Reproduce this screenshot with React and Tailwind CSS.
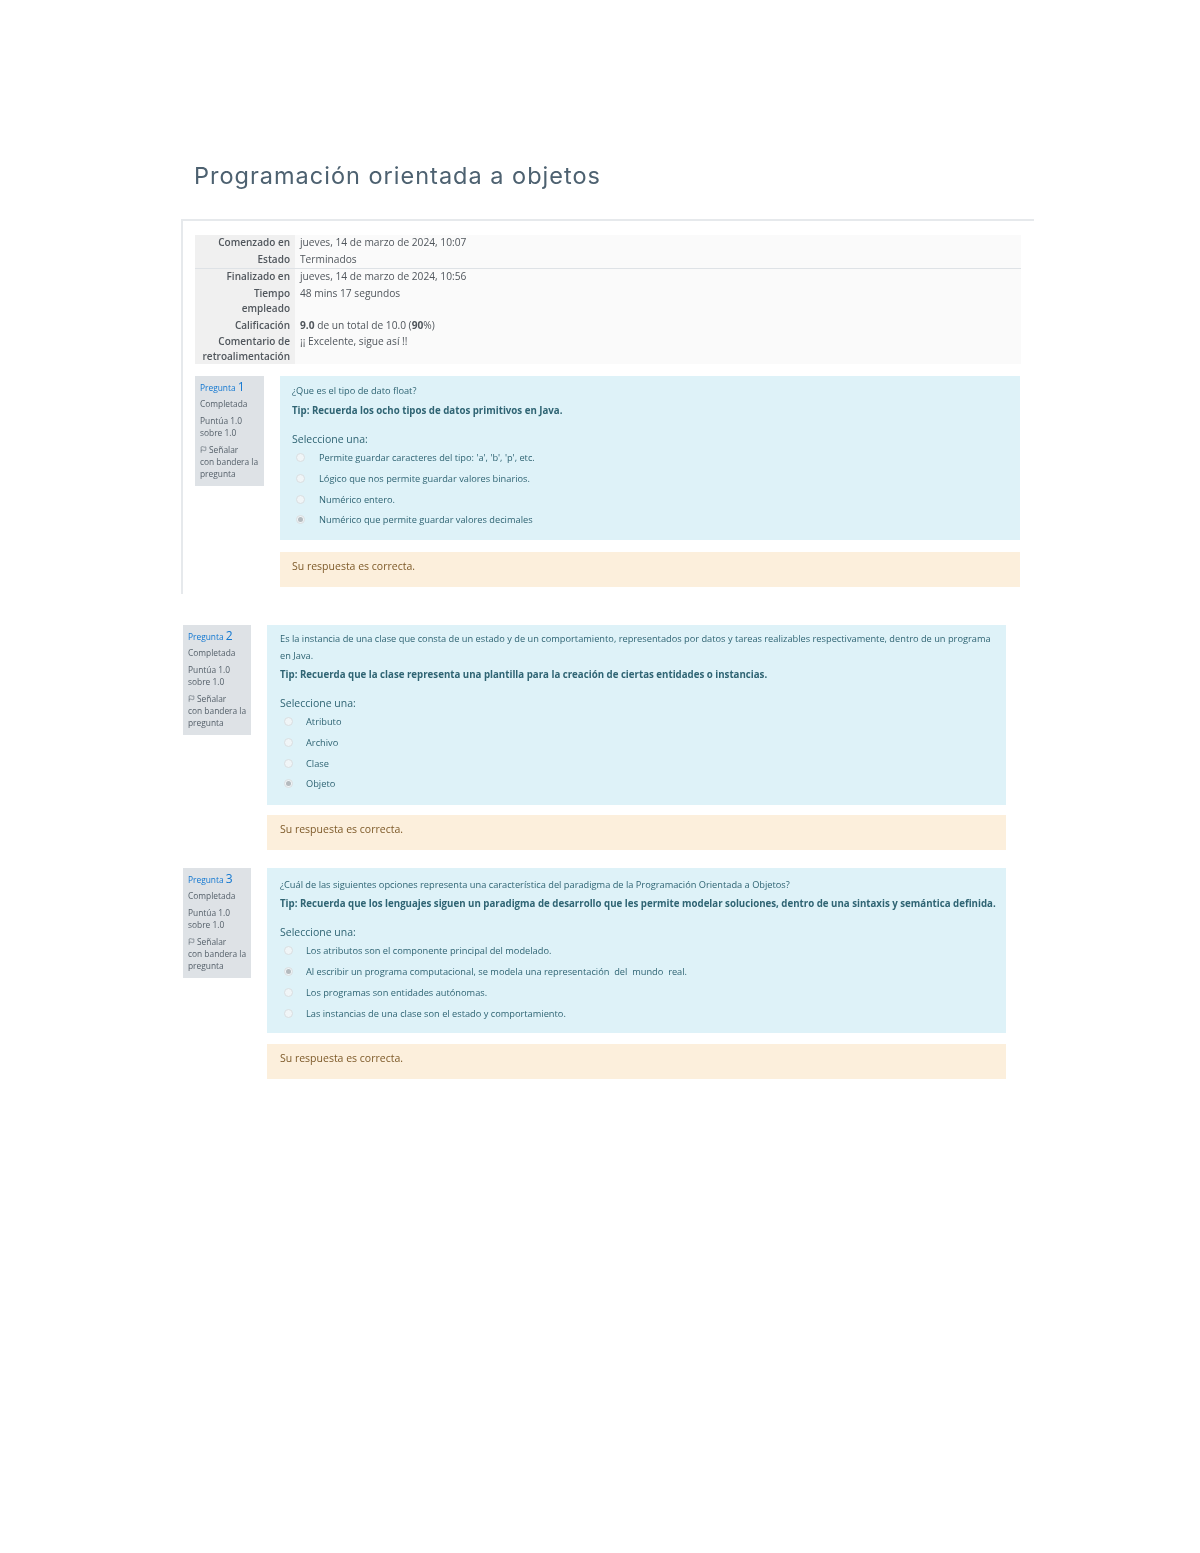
import { Flag } from 'lucide-react'

const SUMMARY = [
  { label: ['Comenzado en'], value: 'jueves, 14 de marzo de 2024, 10:07', pad: 'pb-[2px]' },
  { label: ['Estado'], value: 'Terminados', pad: 'pb-[1px]', divider: true },
  { label: ['Finalizado en'], value: 'jueves, 14 de marzo de 2024, 10:56', pad: 'pb-[2px]' },
  { label: ['Tiempo', 'empleado'], value: '48 mins 17 segundos', pad: 'pb-[2px]' },
  { label: ['Calificación'], value: <><b>9.0</b> de un total de 10.0 (<b>90</b>%)</>, pad: 'pb-[1px]' },
  { label: ['Comentario de', 'retroalimentación'], value: '¡¡ Excelente, sigue así !!', pad: '' },
]

const QUESTIONS = [
  {
    n: 1,
    text: '¿Que es el tipo de dato float?',
    tip: 'Tip: Recuerda los ocho tipos de datos primitivos en Java.',
    options: [
      "Permite guardar caracteres del tipo: 'a', 'b', 'p', etc.",
      'Lógico que nos permite guardar valores binarios.',
      'Numérico entero.',
      'Numérico que permite guardar valores decimales',
    ],
    checked: 3,
    side: 'w-[69px]',
    main: 'w-[740px]',
    pad: 'pl-3 pt-[6px] pb-[12px]',
    left: 'pl-3',
    optGap: 'gap-[14px]',
    tipGap: 'mt-[3px]',
    feedbackGap: 'mt-[12px]',
  },
  {
    n: 2,
    text: 'Es la instancia de una clase que consta de un estado y de un comportamiento, representados por datos y tareas realizables respectivamente, dentro de un programa en Java.',
    tip: 'Tip: Recuerda que la clase representa una plantilla para la creación de ciertas entidades o instancias.',
    options: ['Atributo', 'Archivo', 'Clase', 'Objeto'],
    checked: 3,
    side: 'w-[68px]',
    main: 'w-[739px]',
    pad: 'pl-[13px] pt-[5px] pb-[13px]',
    left: 'pl-[13px]',
    optGap: 'gap-[13px]',
    tipGap: 'mt-[2px]',
    feedbackGap: 'mt-[10px]',
  },
  {
    n: 3,
    text: '¿Cuál de las siguientes opciones representa una característica del paradigma de la Programación Orientada a Objetos?',
    tip: 'Tip: Recuerda que los lenguajes siguen un paradigma de desarrollo que les permite modelar soluciones, dentro de una sintaxis y semántica definida.',
    options: [
      'Los atributos son el componente principal del modelado.',
      'Al escribir un programa computacional, se modela una representación  del  mundo  real.',
      'Los programas son entidades autónomas.',
      'Las instancias de una clase son el estado y comportamiento.',
    ],
    checked: 1,
    side: 'w-[68px]',
    main: 'w-[739px]',
    pad: 'pl-[13px] pt-[8px] pb-[11px]',
    left: 'pl-[13px]',
    optGap: 'gap-[13px]',
    tipGap: 'mt-[2px]',
    feedbackGap: 'mt-[11px]',
  },
]

function Radio({ checked }) {
  return (
    <span className="w-[9px] h-[9px] rounded-full border border-[#d9dee1] bg-[#f0f5f7] flex items-center justify-center flex-shrink-0">
      {checked && <span className="w-[5px] h-[5px] rounded-full bg-[#b4babe]" />}
    </span>
  )
}

function Question({ q }) {
  return (
    <div className="flex items-start gap-4">
      <div className={`${q.side} h-[110px] flex-shrink-0 bg-[#dee2e6] pl-[5px] pt-[3px] text-[8.4px] leading-[12px] text-[#55606a] whitespace-nowrap`}>
        <div className="text-[#1177d1] leading-[15px]">
          Pregunta <span className="text-[12px]">{q.n}</span>
        </div>
        <div className="mt-[3px]">Completada</div>
        <div className="mt-[5px]">Puntúa 1.0<br />sobre 1.0</div>
        <div className="mt-[5px]">
          <Flag className="inline w-[7px] h-[7px] mr-[2px] align-baseline" strokeWidth={2} />
          Señalar<br />con bandera la<br />pregunta
        </div>
      </div>

      <div className={`${q.main} flex-shrink-0`}>
        <div className={`bg-[#def2f8] pr-2 ${q.pad} text-[#2f6473] text-[9.25px] leading-[17px]`}>
          <p>{q.text}</p>
          <p className={`font-bold text-[9.7px] ${q.tipGap}`}>{q.tip}</p>
          <p className="text-[10.5px] mt-[12px]">Seleccione una:</p>
          <div className="flex flex-col gap-[3.8px] mt-[1px]">
            {q.options.map((opt, i) => (
              <div key={opt} className={`flex items-center pl-[4px] ${q.optGap} whitespace-pre`}>
                <Radio checked={i === q.checked} />
                <span>{opt}</span>
              </div>
            ))}
          </div>
        </div>
        <div className={`bg-[#fcefdc] ${q.feedbackGap} h-[35px] ${q.left} pt-[6px] leading-[17px] text-[#7d5a29] text-[10.5px]`}>
          Su respuesta es correcta.
        </div>
      </div>
    </div>
  )
}

export default function App() {
  return (
    <div className="min-h-[1553px] bg-white font-['Open_Sans',sans-serif] blur-[0.5px]">
      <div className="w-[853px] ml-[181px] pt-[160px]">
        <h1 className="pl-[13px] text-[23.5px] leading-[32px] text-[#4d6170] font-['Inter',sans-serif] tracking-[1px]">
          Programación orientada a objetos
        </h1>

        <section className="mt-[27px] h-[375px] border-l-2 border-t-2 border-[#e6e9ec] pl-[12px] pr-[13px] pt-[14px]">
          <div className="text-[10.2px] leading-[15px] text-[#50565c]">
            {SUMMARY.map((row) => (
              <div key={row.label[0]} className={`flex ${row.divider ? 'border-b border-[#dee2e6]' : ''}`}>
                <div className={`w-[100px] flex-shrink-0 bg-[#f0f0f0] px-[5px] ${row.pad} text-right font-semibold text-[10px]`}>
                  {row.label.map((l) => <div key={l}>{l}</div>)}
                </div>
                <div className={`flex-1 bg-[#fafafa] px-[5px] ${row.pad}`}>{row.value}</div>
              </div>
            ))}
          </div>
          <div className="mt-[12px]">
            <Question q={QUESTIONS[0]} />
          </div>
        </section>
      </div>

      <div className="ml-[183px] mt-[31px] flex flex-col gap-[18px]">
        <Question q={QUESTIONS[1]} />
        <Question q={QUESTIONS[2]} />
      </div>
    </div>
  )
}
